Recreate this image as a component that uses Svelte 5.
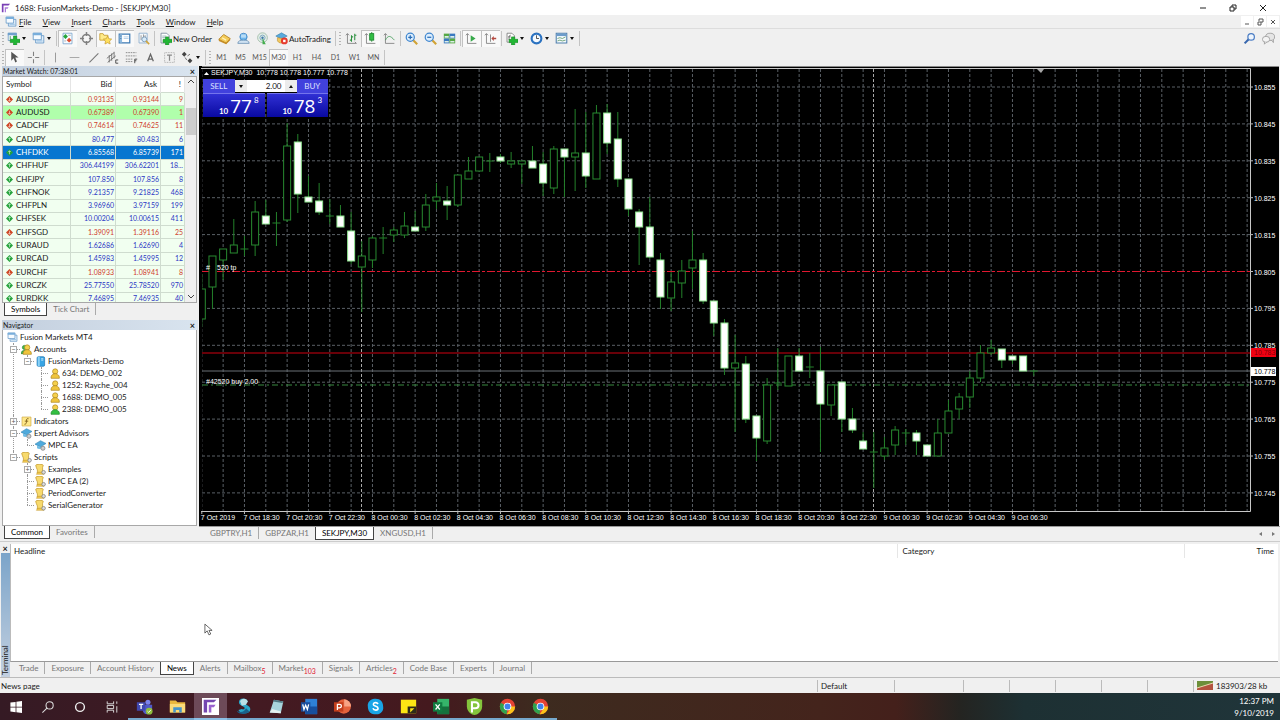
<script lang="ts">
	type Candle = [number, number, number, number, 'up' | 'down' | 'flat'];

	const menus = ['File', 'View', 'Insert', 'Charts', 'Tools', 'Window', 'Help'];
	const timeframes = ['M1', 'M5', 'M15', 'M30', 'H1', 'H4', 'D1', 'W1', 'MN'];
	const drawTools = ['vline', 'hline', 'trend', 'channel', 'fibo', 'letter', 'label'];

	const quotes = [
		['AUDSGD', '0.93135', '0.93144', '9', 'down'],
		['AUDUSD', '0.67389', '0.67390', '1', 'down'],
		['CADCHF', '0.74614', '0.74625', '11', 'down'],
		['CADJPY', '80.477', '80.483', '6', 'up'],
		['CHFDKK', '6.85568', '6.85739', '171', 'up'],
		['CHFHUF', '306.44199', '306.62201', '18...', 'up'],
		['CHFJPY', '107.850', '107.856', '8', 'up'],
		['CHFNOK', '9.21357', '9.21825', '468', 'up'],
		['CHFPLN', '3.96960', '3.97159', '199', 'up'],
		['CHFSEK', '10.00204', '10.00615', '411', 'up'],
		['CHFSGD', '1.39091', '1.39116', '25', 'down'],
		['EURAUD', '1.62686', '1.62690', '4', 'up'],
		['EURCAD', '1.45983', '1.45995', '12', 'up'],
		['EURCHF', '1.08933', '1.08941', '8', 'down'],
		['EURCZK', '25.77550', '25.78520', '970', 'up'],
		['EURDKK', '7.46895', '7.46935', '40', 'up'],
	];

	const tree = [
		{ label: 'Accounts', icon: 'users', toggle: '-', items: [
			{ label: 'FusionMarkets-Demo', icon: 'server', toggle: '-', items: [
				{ label: '634: DEMO_002', icon: 'user' },
				{ label: '1252: Rayche_004', icon: 'user' },
				{ label: '1688: DEMO_005', icon: 'user' },
				{ label: '2388: DEMO_005', icon: 'userOn' },
			] },
		] },
		{ label: 'Indicators', icon: 'func', toggle: '+' },
		{ label: 'Expert Advisors', icon: 'hat', toggle: '-', items: [
			{ label: 'MPC EA', icon: 'hat' },
		] },
		{ label: 'Scripts', icon: 'script', toggle: '-', items: [
			{ label: 'Examples', icon: 'script', toggle: '+' },
			{ label: 'MPC EA (2)', icon: 'script' },
			{ label: 'PeriodConverter', icon: 'script' },
			{ label: 'SerialGenerator', icon: 'script' },
		] },
	];

	const chartTabs = ['GBPTRY,H1', 'GBPZAR,H1', 'SEKJPY,M30', 'XNGUSD,H1'];
	const terminalTabs = [
		['Trade'], ['Exposure'], ['Account History'], ['News'], ['Alerts'], ['Mailbox', '5'], ['Market', '103'],
		['Signals'], ['Articles', '2'], ['Code Base'], ['Experts'], ['Journal'],
	];
	const shell = ['start', 'find', 'cortana', 'tasks'];
	const apps = ['teams', 'folder', 'fusion', 'swirl', 'notes', 'word', 'powerpoint', 'skype', 'sticky', 'excel', 'shield', 'chrome', 'chrome'];

	let chartTab = $state('SEKJPY,M30');
	let terminalTab = $state('News');
	let timeframe = $state('M30');
	let selected = $state('CHFDKK');
	let volume = $state('2.00');

	// high, body top, body bottom, low
	const candles: Candle[] = [
		[208, 223, 253, 261, 'up'], [190, 190, 221, 243, 'up'], [183, 183, 194, 214, 'up'], [153, 179, 187, 187, 'up'],
		[170, 183, 183, 190, 'flat'], [135, 146, 179, 190, 'up'], [134, 150, 158, 158, 'down'], [146, 157, 157, 180, 'flat'],
		[57, 80, 154, 156, 'up'], [68, 76, 128, 147, 'down'], [110, 131, 136, 136, 'down'], [117, 135, 146, 149, 'down'],
		[133, 150, 150, 158, 'flat'], [139, 150, 161, 161, 'down'], [146, 165, 195, 198, 'down'], [175, 190, 201, 246, 'up'],
		[170, 172, 194, 202, 'up'], [161, 172, 172, 188, 'flat'], [161, 164, 169, 176, 'up'], [146, 160, 169, 172, 'up'],
		[145, 161, 165, 165, 'down'], [128, 139, 161, 165, 'up'], [117, 131, 135, 143, 'up'], [120, 135, 139, 154, 'down'],
		[109, 109, 139, 141, 'up'], [91, 105, 113, 113, 'up'], [91, 91, 105, 105, 'up'], [87, 95, 95, 106, 'flat'],
		[88, 91, 95, 97, 'down'], [86, 95, 98, 102, 'up'], [95, 95, 98, 118, 'up'], [80, 95, 102, 102, 'down'],
		[86, 98, 117, 130, 'down'], [80, 83, 122, 128, 'up'], [83, 83, 91, 131, 'down'], [43, 87, 91, 125, 'up'],
		[46, 87, 110, 122, 'down'], [39, 47, 113, 113, 'up'], [38, 47, 77, 88, 'down'], [46, 73, 113, 121, 'down'],
		[113, 113, 143, 150, 'down'], [143, 146, 161, 199, 'down'], [131, 161, 191, 193, 'down'], [187, 194, 231, 243, 'down'],
		[206, 216, 232, 245, 'up'], [194, 205, 217, 232, 'up'], [165, 194, 202, 223, 'up'], [187, 194, 235, 238, 'down'],
		[235, 235, 257, 270, 'down'], [253, 257, 302, 309, 'down'], [269, 297, 302, 366, 'up'], [290, 298, 353, 357, 'down'],
		[350, 350, 372, 395, 'down'], [312, 319, 375, 378, 'up'], [282, 317, 317, 324, 'flat'], [290, 290, 320, 320, 'up'],
		[282, 290, 305, 305, 'down'], [287, 301, 301, 312, 'flat'], [281, 305, 338, 386, 'down'], [319, 319, 339, 350, 'up'],
		[316, 316, 353, 366, 'down'], [342, 353, 364, 367, 'down'], [366, 375, 383, 383, 'down'], [366, 386, 386, 422, 'flat'],
		[371, 382, 390, 394, 'up'], [360, 364, 379, 389, 'up'], [363, 367, 367, 379, 'flat'], [364, 367, 375, 389, 'down'],
		[379, 379, 390, 390, 'down'], [353, 367, 390, 390, 'up'], [334, 345, 367, 367, 'up'], [327, 331, 343, 353, 'up'],
		[305, 312, 331, 342, 'up'], [279, 287, 312, 316, 'up'], [274, 282, 287, 289, 'up'], [283, 283, 294, 302, 'down'],
		[290, 290, 294, 298, 'down'], [290, 290, 305, 305, 'down'], [304, 305, 305, 310, 'flat'],
	];
	const times = [
		'7 Oct 2019', '7 Oct 18:30', '7 Oct 20:30', '7 Oct 22:30', '8 Oct 00:30', '8 Oct 02:30', '8 Oct 04:30',
		'8 Oct 06:30', '8 Oct 08:30', '8 Oct 10:30', '8 Oct 12:30', '8 Oct 14:30', '8 Oct 16:30', '8 Oct 18:30',
		'8 Oct 20:30', '8 Oct 22:30', '9 Oct 00:30', '9 Oct 02:30', '9 Oct 04:30', '9 Oct 06:30',
	];
	const prices = Array.from({ length: 12 }, (_, i) => (10.855 - i * 0.01).toFixed(3));

	let width = $state(1081);
	let height = $state(460);
	let right = $derived(width - 29);
	let bottom = $derived(height - 15);
	let columns = $derived(Math.max(0, Math.floor((right - 3) / (64 / 3)) + 1));

	const barX = (i: number) => 2.8 + (i * 32) / 3;
	const priceY = (i: number) => 21 + i * 36.9;
</script>

{#snippet icon(name: string)}
	<svg class="icon" viewBox="0 0 16 16" aria-hidden="true">
		{#if name === 'newchart'}
			<path d="M1.500 1.500h10v9h-10z" fill="#f2f8fd" stroke="#6f9cc4" /><path d="M1 1h11v3H1z" fill="#6fa0cc" /><path d="M4 5v4" stroke="#4a9850" /><path d="M8 5h4v4h4v4h-4v3H8v-3H4V9h4z" fill="#21b634" stroke="#12861f" stroke-width=".7" />
		{:else if name === 'windows'}
			<path d="M4.500 4.500h10v9h-10z" fill="#e7f2fb" stroke="#5e93c4" /><path d="M1.500 1.500h10v8h-10z" fill="#f6fbff" stroke="#5e93c4" /><path d="M1 1h11v3H1z" fill="#79aedb" /><path d="M6 11h7" stroke="#79aedb" />
		{:else if name === 'watch'}
			<path d="M2.500 1.500h11v13h-11z" fill="#f7fbff" stroke="#76a3cb" /><path d="M5.500 2.500l3 3-3 3-3-3z" fill="#25a63b" /><path d="M10 7l3 3-3 3-3-3z" fill="#dd4d31" /><path d="M9 4h3M4 11h2" stroke="#999" />
		{:else if name === 'target'}
			<circle cx="8" cy="8" r="5" fill="#f6f6f6" stroke="#808080" stroke-width="1.800" /><path d="M8 0v5M8 11v5M0 8h5M11 8h5" stroke="#808080" stroke-width="1.800" />
		{:else if name === 'navigator'}
			<path d="M1 2h4l1 2h5v6H1z" fill="#ffeb8a" stroke="#c59b2e" /><path d="M10.500 5l1.600 3.300 3.500.4-2.600 2.500.7 3.600-3.200-1.700-3.200 1.700.7-3.600-2.600-2.500 3.500-.4z" fill="#ffe05d" stroke="#c2962a" stroke-width=".8" />
		{:else if name === 'terminal'}
			<path d="M1.500 2.500h13v11h-13z" fill="#fff" stroke="#3d7ab4" stroke-width="1.500" /><path d="M2 3h3v10H2z" fill="#8fbbe0" /><path d="M7 6h6M7 8h6" stroke="#a9c8e4" /><path d="M3 5h1M3 8h1" stroke="#274f7b" />
		{:else if name === 'tester'}
			<path d="M2.500 1.500h10v12h-10z" fill="#f4f8fc" stroke="#86a9ca" /><path d="M5 4v6M8 3v5M10 4v3" stroke="#888" /><circle cx="9" cy="9" r="3" fill="#d7ebfa" stroke="#6f93b4" /><path d="M11 11l4 4" stroke="#d2a63d" stroke-width="2" />
		{:else if name === 'order'}
			<path d="M2.500 1.500h7l3 3v9h-10z" fill="#fff" stroke="#789" /><path d="M4 5h5M4 7h4" stroke="#8aa" /><path d="M8 6h4v3h4v4h-4v3H8v-3H5V9h3z" fill="#21b634" stroke="#12861f" stroke-width=".7" />
		{:else if name === 'book'}
			<path d="M1 9l6-6 8 5-5 6z" fill="#f3cb58" stroke="#b07c1c" /><path d="M1 9v2l9 4 5-5V8l-5 5z" fill="#c58d28" /><path d="M5 7l5 3" stroke="#fff2bd" stroke-width="1.500" />
		{:else if name === 'headset'}
			<circle cx="8" cy="6" r="4.500" fill="#6db6ec" stroke="#3c83c4" /><path d="M1 14c0-3 3-4 7-4s7 1 7 4z" fill="#cfe2f2" stroke="#6d93b5" /><path d="M5 3h6v4H5z" fill="#b8dcf6" />
		{:else if name === 'signal'}
			<circle cx="8" cy="7" r="6" fill="#e5f0e8" stroke="#9bb7a5" /><circle cx="8" cy="7" r="3.200" fill="none" stroke="#6d9ab8" /><path d="M8 7l4 8H8z" fill="#43ad4e" /><circle cx="8" cy="7" r="1.500" fill="#3c79a8" />
		{:else if name === 'auto'}
			<path d="M1 5l7-4 7 4-7 4z" fill="#58a9dc" stroke="#357ca9" stroke-width=".7" /><path d="M3 7v4c2 3 5 3 7 2V8z" fill="#f1c860" stroke="#ba8c2e" stroke-width=".7" /><circle cx="11.500" cy="11" r="4.200" fill="#e6392b" /><path d="M10 9.500h3v3h-3z" fill="#fff" />
		{:else if name === 'bars'}
			<path d="M3 2v12h11M1 4l2-2 2 2M12 12l2 2" stroke="#777" fill="none" /><path d="M8 4v8M8 10H6M8 6h2M12 2v8M12 4h2" stroke="#2d9140" stroke-width="1.300" />
		{:else if name === 'candles'}
			<path d="M3 2v12h11M1 4l2-2 2 2" stroke="#777" fill="none" /><path d="M9.500 0v12" stroke="#197e2a" /><rect x="7" y="2" width="5" height="8" fill="#31bd44" stroke="#17852a" />
		{:else if name === 'line'}
			<path d="M3 2v12h11M1 4l2-2 2 2" stroke="#777" fill="none" /><path d="M3 10c3-6 6-6 11 0" stroke="#3b9951" fill="none" />
		{:else if name === 'zoomin' || name === 'zoomout'}
			<path d="M9 9l6 6" stroke="#d1a335" stroke-width="2.600" /><circle cx="6.500" cy="6.500" r="5" fill="#dceefe" stroke="#3f86cf" stroke-width="1.500" /><path d={name === 'zoomin' ? 'M4 6.500h5M6.500 4v5' : 'M4 6.500h5'} stroke="#2a6db5" stroke-width="1.500" />
		{:else if name === 'tile'}
			<path d="M1 2h7v6H1z" fill="#56a945" /><path d="M8 2h7v6H8z" fill="#3979c1" /><path d="M1 8h7v6H1z" fill="#3979c1" /><path d="M8 8h7v6H8z" fill="#56a945" /><path d="M2 5h5v2H2zM9 5h5v2H9zM2 11h5v2H2zM9 11h5v2H9z" fill="#dceee8" />
		{:else if name === 'scroll'}
			<path d="M3 2v12h11M1 4l2-2 2 2" stroke="#777" fill="none" /><path d="M7 4l6 4-6 4z" fill="#37a94a" />
		{:else if name === 'shift'}
			<path d="M3 2v12h11M1 4l2-2 2 2M8 3v9" stroke="#777" fill="none" /><path d="M9 8l3-3v2h3v2h-3v2z" fill="#b5483f" />
		{:else if name === 'indicator'}
			<path d="M2.500 1.500h6l3 3v8h-9z" fill="#fff" stroke="#777" /><path d="M7 4c-2 0-2 1-2 6M4 6h3" stroke="#555" fill="none" /><path d="M8 6h4v3h4v4h-4v3H8v-3H5V9h3z" fill="#21b634" stroke="#12861f" stroke-width=".7" />
		{:else if name === 'clock'}
			<circle cx="8" cy="8" r="6" fill="#f5faff" stroke="#2b72c0" stroke-width="2.600" /><path d="M8 4v4h3" stroke="#333" fill="none" />
		{:else if name === 'template'}
			<path d="M1.500 1.500h13v12h-13z" fill="#f5faff" stroke="#4e7eac" stroke-width="1.300" /><path d="M2 2h12v3H2z" fill="#6c9ccb" /><path d="M3 8l3-1 3 1 4-2M3 11l3-1 3 1 4-1" stroke="#5b9864" fill="none" />
		{:else if name === 'cursor'}
			<path d="M4 1v11l3-3 2 5 2-1-2-5h4z" fill="#555" />
		{:else if name === 'cross'}
			<path d="M8 1v5M8 10v5M1 8h5M10 8h5" stroke="#808080" stroke-width="1.300" />
		{:else if name === 'vline'}
			<path d="M8 2v12" stroke="#888" />
		{:else if name === 'hline'}
			<path d="M2 8h12" stroke="#999" />
		{:else if name === 'trend'}
			<path d="M3 14L14 3" stroke="#777" stroke-width="1.300" />
		{:else if name === 'channel'}
			<path d="M1 9l9-7M2 14l10-8M4 5v9M7 3v9M10 1v8" stroke="#666" /><path d="M15 11h-3v4h3" stroke="#333" fill="none" />
		{:else if name === 'fibo'}
			<path d="M1 2h13M1 6h13M1 10h9M1 13h9" stroke="#777" stroke-dasharray="2 1" /><path d="M12 15v-5h3M12 12h2" stroke="#333" fill="none" />
		{:else if name === 'letter'}
			<path d="M4.500 12.500L8 4l3.500 8.500M6 10h4" stroke="#666" stroke-width="1.600" fill="none" />
		{:else if name === 'label'}
			<path d="M2 2h12v12H2z" stroke="#999" stroke-dasharray="1 1" fill="none" /><path d="M5 5h6M8 5v7" stroke="#888" stroke-width="1.500" />
		{:else if name === 'shapes'}
			<path d="M4 1l3 3-3 3-3-3zM11 9l3 3-3 3-3-3z" fill="#444" /><path d="M5 8l2 3M8 6l3-2" stroke="#555" />
		{:else if name === 'search'}
			<path d="M7 9l-5 5" stroke="#3867ae" stroke-width="2.600" /><circle cx="10" cy="6" r="4" fill="#eef5fd" stroke="#4a7cc3" stroke-width="1.500" />
		{:else if name === 'chat'}
			<ellipse cx="10" cy="6" rx="5.500" ry="4.500" fill="#e6e6e6" stroke="#999" /><ellipse cx="5" cy="9" rx="4.500" ry="3.700" fill="#f4f4f4" stroke="#999" /><path d="M3 12v3l3-3M12 10l2 3v-4" fill="#eee" stroke="#999" />
		{:else if name === 'user' || name === 'userOn' || name === 'users'}
			{#if name === 'users'}
				<circle cx="5" cy="5" r="3" fill="#43b94a" stroke="#2b8332" /><path d="M0 14c0-6 9-6 9 0z" fill="#43b94a" stroke="#2b8332" />
			{/if}
			<circle cx="9" cy="5" r="3.800" fill="#f5d04c" stroke="#ac8420" /><path d="M3 15c-1-9 13-9 12 0z" fill={name === 'userOn' ? '#34c043' : '#efc43c'} stroke={name === 'userOn' ? '#1e8a2b' : '#ac8420'} />
		{:else if name === 'server'}
			<rect x="3" y="1" width="11" height="14" rx="2" fill="#38a5e5" stroke="#1b73b1" /><path d="M4 1h3v14H4z" fill="#8bd1f5" /><path d="M9 4h3M9 6h3" stroke="#fff" />
		{:else if name === 'func'}
			<path d="M1.500 1.500h13v13h-13z" fill="#ffe889" stroke="#cfab45" /><path d="M11 4c-3-1-3 1-3 4s-1 4-3 4M5.500 7.500h5" stroke="#7a5b16" stroke-width="1.300" fill="none" />
		{:else if name === 'hat'}
			<path d="M0 6l8-5 8 4-8 5z" fill="#4faadc" stroke="#2e7fae" stroke-width=".8" /><path d="M3 8v4c3 2 6 1 8-1V7l-3 3z" fill="#6ebbe4" /><circle cx="11.500" cy="12" r="3" fill="#ccc" stroke="#777" />
		{:else if name === 'script'}
			<path d="M1 2c0-2 11-2 11 0l-1 3v8H3c2-4-1-6-2-11z" fill="#f7da6e" stroke="#bf9428" /><path d="M4 12h9v3H2z" fill="#f3cb51" stroke="#bf9428" stroke-width=".7" /><circle cx="12.500" cy="12" r="2.600" fill="#ddd" stroke="#777" />
		{/if}
	</svg>
{/snippet}

{#snippet appIcon(name: string)}
	<svg class="app-icon" viewBox="0 0 20 20" aria-hidden="true">
		{#if name === 'start'}
			<path d="M3 4.500l6.500-.9v6H3zM10.500 3.500l7-.9v7h-7zM3 10.500h6.500v6L3 15.600zM10.500 10.500h7v7l-7-.9z" fill="#fff" />
		{:else if name === 'find'}
			<circle cx="12" cy="8" r="4.500" fill="none" stroke="#ddd" stroke-width="1.300" /><path d="M9 11l-6 6" stroke="#ddd" stroke-width="1.300" />
		{:else if name === 'cortana'}
			<circle cx="10" cy="10" r="5.500" fill="none" stroke="#eee" stroke-width="1.800" />
		{:else if name === 'tasks'}
			<path d="M4 3v3h8V3M4 17v-3h8v3M4 8h8v4H4zM16 3v3M16 9v8" fill="none" stroke="#ddd" stroke-width="1.200" />
		{:else if name === 'teams'}
			<circle cx="14" cy="5" r="3" fill="#7b83eb" /><path d="M8 8h11v5c0 4-3 6-6 6s-5-2-5-5z" fill="#5059c9" /><path d="M1 5h10v10H1z" fill="#4048b0" /><path d="M3.500 7.500h5M6 7.500v5.500" stroke="#fff" stroke-width="1.500" /><circle cx="15.500" cy="15.500" r="4" fill="#8dbd3d" /><path d="M13.500 15.500l1.500 1.500 2.500-3" stroke="#fff" fill="none" />
		{:else if name === 'folder'}
			<path d="M1 3h7l2 2h9v12H1z" fill="#e9b73d" /><path d="M1 7h18v10H1z" fill="#fbdb79" /><path d="M5 11h10v6h-3v-3H8v3H5z" fill="#4694c9" />
		{:else if name === 'fusion'}
			<path d="M0 0h20v20H0z" fill="#fff" /><path d="M2 2h15l-3 3H6v12H2z" fill="#7446b0" /><path d="M8 8h8l-2 3h-3v6H8z" fill="#9a62cf" />
		{:else if name === 'swirl'}
			<path d="M14 2C7-2 2 4 6 8l5 3c1 2-1 3-3 2l-4 1c2 5 14 6 14-1 0-5-8-5-7-8 0-1 2-1 4 0z" fill="#28a6c8" /><path d="M6 4c1-4 8-4 9 0l-2 4-5 1z" fill="#b9dfe5" /><path d="M2 15c5 3 9 1 11-3l4 4c-3 4-13 4-15-1z" fill="#19638b" />
		{:else if name === 'notes'}
			<path d="M7 2l11 2-3 14-13-1z" fill="#a8d4dc" /><path d="M7 2l11 2-1 2L6 4z" fill="#517a85" /><path d="M5 13l10 3v2L2 17z" fill="#e4f0f0" />
		{:else if name === 'word' || name === 'excel'}
			<path d="M5 1h14v18H5z" fill={name === 'word' ? '#2e80d5' : '#35b56a'} /><path d="M5 10h14v9H5z" fill={name === 'word' ? '#174f9d' : '#15713d'} /><path d="M0 5h11v11H0z" fill={name === 'word' ? '#194d9c' : '#107c41'} /><path d={name === 'word' ? 'M2 7.500l1.500 6 2-5 2 5 1.500-6' : 'M3 7.500l5 6M8 7.500l-5 6'} stroke="#fff" stroke-width="1.500" fill="none" />
		{:else if name === 'powerpoint'}
			<circle cx="11.500" cy="10" r="8.500" fill="#e5633c" /><path d="M12 1.500a8.500 8.500 0 0 1 8 8.500h-8z" fill="#f8a384" /><path d="M0 5h11v11H0z" fill="#c43e1c" /><path d="M4 14V7.500h2.500c3 0 3 4 0 4H4" stroke="#fff" stroke-width="1.500" fill="none" />
		{:else if name === 'skype'}
			<path d="M10 1c6 0 9 4 9 9 1 6-4 10-9 9-6 1-9-4-9-9-1-5 4-10 9-9z" fill="#1aa5e7" /><path d="M13 7c-2-3-7-1-5 1.500 1 1 5 1 5 3.500 0 3-5 3-6 0" stroke="#fff" stroke-width="1.900" fill="none" />
		{:else if name === 'sticky'}
			<path d="M1 2h18v16H1z" fill="#fde514" /><path d="M9 10h10v8H9z" fill="#2d2b1a" /><path d="M12 12h5l-5 5z" fill="#fde514" />
		{:else if name === 'shield'}
			<path d="M1 2l9-2 9 2v8c0 6-6 10-9 10S1 16 1 10z" fill="#84c43c" /><path d="M7 17V5h4c5 0 5 7 0 7H8" fill="none" stroke="#fff" stroke-width="2.400" />
		{:else if name === 'chrome'}
			<circle cx="10" cy="10" r="9" fill="#e54335" /><path d="M10 10L2.200 5.500A9 9 0 0 0 9 19z" fill="#2fa34e" /><path d="M10 10h9a9 9 0 0 1-10 9l5-7z" fill="#fbc41a" /><circle cx="10" cy="10" r="4.500" fill="#fff" /><circle cx="10" cy="10" r="3.500" fill="#3f82ed" />
		{/if}
	</svg>
{/snippet}

{#snippet tool(name: string, active = false, drop = false)}
	<button class="tool" class:active class:drop aria-label={name}>
		{@render icon(name)}
		{#if drop}<span class="caret"></span>{/if}
	</button>
{/snippet}

{#snippet branch(items: any[])}
	<ul>
		{#each items as item}
			<li>
				{#if item.toggle}<button class="toggle" aria-label="Toggle {item.label}">{item.toggle === '+' ? '+' : '−'}</button>{/if}
				<div class="node">{@render icon(item.icon)}<span>{item.label}</span></div>
				{#if item.items}{@render branch(item.items)}{/if}
			</li>
		{/each}
	</ul>
{/snippet}

<div class="desktop">
	<header class="titlebar">
		<svg class="logo" viewBox="0 0 12 12" aria-hidden="true"><path d="M1 1h10L9 3H3v8H1z" fill="#7a3fb5" /><path d="M4.500 5H9L8 7H6v4H4.500z" fill="#a878d8" /></svg>
		<span>1688: FusionMarkets-Demo - [SEKJPY,M30]</span>
		<div class="window-buttons">
			<button aria-label="Minimize"><svg viewBox="0 0 8 8"><path d="M1 4h6" /></svg></button>
			<button aria-label="Restore"><svg viewBox="0 0 8 8"><path d="M1 3h4v4H1zM3 3V1h4v4H5" /></svg></button>
			<button aria-label="Close"><svg viewBox="0 0 8 8"><path d="M1 1l6 6M7 1L1 7" /></svg></button>
		</div>
	</header>

	<nav class="menubar">
		{@render icon('windows')}
		{#each menus as m}
			<button><u>{m[0]}</u>{m.slice(1)}</button>
		{/each}
		<div class="mdi-buttons">
			<button aria-label="Minimize chart"><svg viewBox="0 0 8 8"><path d="M2 6h4" /></svg></button>
			<button aria-label="Restore chart"><svg viewBox="0 0 8 8"><path d="M2 4h3v3H2zM3 3V1h4v3H5" /></svg></button>
			<button aria-label="Close chart"><svg viewBox="0 0 8 8"><path d="M2 2l4 4M6 2L2 6" /></svg></button>
		</div>
	</nav>

	<div class="toolbar">
		<i class="grip"></i>
		{@render tool('newchart', false, true)}
		{@render tool('windows', false, true)}
		<i class="sep"></i>
		{@render tool('watch', true)}
		{@render tool('target')}
		{@render tool('navigator', true)}
		{@render tool('terminal', true)}
		{@render tool('tester')}
		<i class="sep"></i>
		<button class="text-tool">{@render icon('order')}New Order</button>
		{@render tool('book')}
		{@render tool('headset')}
		{@render tool('signal')}
		<button class="text-tool">{@render icon('auto')}AutoTrading</button>
		<i class="sep"></i>
		<i class="grip"></i>
		{@render tool('bars')}
		{@render tool('candles', true)}
		{@render tool('line')}
		<i class="sep"></i>
		{@render tool('zoomin')}
		{@render tool('zoomout')}
		{@render tool('tile')}
		<i class="sep"></i>
		{@render tool('scroll', true)}
		{@render tool('shift', true)}
		<i class="sep"></i>
		{@render tool('indicator', false, true)}
		{@render tool('clock', false, true)}
		{@render tool('template', false, true)}
		<i class="sep"></i>
		<div class="toolbar-end">
			{@render tool('search')}
			{@render tool('chat')}
		</div>
	</div>

	<div class="toolbar second">
		<i class="grip"></i>
		{@render tool('cursor', true)}
		{@render tool('cross')}
		<i class="sep"></i>
		{#each drawTools as t}
			{@render tool(t)}
		{/each}
		{@render tool('shapes', false, true)}
		<i class="sep"></i>
		<i class="grip"></i>
		{#each timeframes as t}
			<button class="tool frame" class:active={timeframe === t} onclick={() => timeframe = t}>{t}</button>
		{/each}
		<i class="sep"></i>
	</div>

	<main>
		<aside>
			<section class="panel watch">
				<h2>Market Watch: 07:38:01<button aria-label="Close Market Watch">×</button></h2>
				<div class="watch-body">
					<div class="watch-table">
						<table>
							<thead>
								<tr><th>Symbol</th><th>Bid</th><th>Ask</th><th>!</th></tr>
							</thead>
							<tbody>
								{#each quotes as [symbol, bid, ask, spread, dir]}
									<tr class={dir} class:hot={symbol === 'AUDUSD'} class:selected={selected === symbol} onclick={() => selected = symbol}>
										<td><svg class="tick" viewBox="0 0 8 8" aria-hidden="true"><path class="gem" d="M4 0l4 4-4 4-4-4z" /><path d={dir === 'up' ? 'M4 2v4M2.500 3.500L4 2l1.500 1.500' : 'M4 2v4M2.500 4.500L4 6l1.500-1.500'} fill="none" stroke="#fff" stroke-width=".6" /></svg>{symbol}</td>
										<td>{bid}</td><td>{ask}</td><td>{spread}</td>
									</tr>
								{/each}
							</tbody>
						</table>
					</div>
					<div class="scrollbar">
						<svg viewBox="0 0 8 8"><path d="M1 5l3-3 3 3" /></svg>
						<i></i>
						<svg viewBox="0 0 8 8"><path d="M1 2l3 3 3-3" /></svg>
					</div>
				</div>
				<div class="tabs">
					<button class="active">Symbols</button>
					<button>Tick Chart</button>
				</div>
			</section>

			<section class="panel navigator">
				<h2>Navigator<button aria-label="Close Navigator">×</button></h2>
				<div class="tree">
					<div class="node">{@render icon('windows')}<span>Fusion Markets MT4</span></div>
					{@render branch(tree)}
				</div>
				<div class="tabs">
					<button class="active">Common</button>
					<button>Favorites</button>
				</div>
			</section>
		</aside>

		<section class="chart">
			<div class="canvas" bind:clientWidth={width} bind:clientHeight={height}>
				<svg class="plot" width="100%" height="100%" role="img" aria-label="SEKJPY M30 chart">
					<g class="grid">
						{#each Array(columns) as _, i}
							<line x1={barX(i * 2)} x2={barX(i * 2)} y1="3" y2={bottom} />
						{/each}
						{#each prices as _, i}
							<line x1="3" x2={right} y1={priceY(i)} y2={priceY(i)} />
						{/each}
					</g>
					<line class="day" x1="162.500" x2="162.500" y1="3" y2={bottom} />
					<line class="day" x1="674.500" x2="674.500" y1="3" y2={bottom} />
					<line class="tp" x1="3" x2={right} y1="205.500" y2="205.500" />
					<line class="ask" x1="3" x2={right} y1="287" y2="287" />
					<line class="bid" x1="3" x2={right} y1="305" y2="305" />
					<line class="position" x1="3" x2={right} y1="319" y2="319" />
					{#each candles as [high, top, low, tail, kind], i}
						<g class="candle {kind}">
							<line x1={barX(i)} x2={barX(i)} y1={high} y2={tail} />
							{#if kind === 'flat'}
								<line x1={barX(i) - 4} x2={barX(i) + 4} y1={top} y2={top} />
							{:else}
								<rect x={barX(i) - 3.5} y={top} width="7" height={low - top} />
							{/if}
						</g>
					{/each}
					<path d="M0 0h3v{height}H0z" fill="#000" />
					<path class="frame-line" d="M2 2.500H{right + 0.5}V{bottom + 0.5}H2" />
					<path d="M838 3h7l-3 4z" fill="#a8a8a8" />
					{#each prices as price, i}
						<line class="notch" x1={right} x2={right + 3} y1={priceY(i)} y2={priceY(i)} />
						<text x={right + 4} y={priceY(i) + 3}>{price}</text>
					{/each}
					<rect x={right + 1} y="282" width="25" height="9" fill="#f00012" />
					<text x={right + 4} y="289" class="dark-red">10.783</text>
					<rect x={right + 1} y="301" width="25" height="9" fill="#fff" />
					<text x={right + 4} y="308" class="black">10.778</text>
					{#each times as time, i}
						<line class="notch" x1={barX(i * 4)} x2={barX(i * 4)} y1={bottom} y2={bottom + 3} />
						<text x={barX(i * 4) - 1} y={bottom + 9}>{time}</text>
					{/each}
					<path d="M5 9h5l-2.500-3z" fill="#fff" />
					<text x="12" y="9">SEKJPY,M30&nbsp; 10.778 10.778 10.777 10.778</text>
					<text x="7" y="204">#</text>
					<text x="18" y="204">520 tp</text>
					<text x="7" y="318">#42520 buy 2.00</text>
				</svg>

				<div class="one-click">
					<div class="order-row">
						<button class="side">SELL</button>
						<button class="step" aria-label="Decrease volume"><span class="caret"></span></button>
						<input aria-label="Volume" bind:value={volume} />
						<button class="step" aria-label="Increase volume"><span class="caret up"></span></button>
						<button class="side">BUY</button>
					</div>
					<div class="price-row">
						<button><b>10</b><strong>77</strong><sup>8</sup></button>
						<button><b>10</b><strong>78</strong><sup>3</sup></button>
					</div>
				</div>
			</div>
			<div class="chart-tabs tabs">
				{#each chartTabs as t}
					<button class:active={chartTab === t} onclick={() => chartTab = t}>{t}</button>
				{/each}
				<div class="tab-scroll">
					<button aria-label="Previous tabs"><span class="caret left"></span></button>
					<button aria-label="Next tabs"><span class="caret right"></span></button>
				</div>
			</div>
		</section>
	</main>

	<section class="terminal">
		<div class="spine">
			<button aria-label="Close Terminal">×</button>
			<span>Terminal</span>
		</div>
		<div class="terminal-body">
			<div class="news">
				<table>
					<thead><tr><th>Headline</th><th>Category</th><th>Time</th></tr></thead>
				</table>
			</div>
			<div class="tabs">
				{#each terminalTabs as [name, count]}
					<button class:active={terminalTab === name} onclick={() => terminalTab = name}>{name}{#if count}<sub>{count}</sub>{/if}</button>
				{/each}
			</div>
		</div>
		<svg class="pointer" viewBox="0 0 10 14" aria-hidden="true"><path d="M1 1v10l2.500-2.500L5.500 13l2-1-2-4H9z" fill="#fff" stroke="#333" stroke-width=".8" /></svg>
	</section>

	<footer class="status">
		<span>News page</span>
		<span>Default</span>
		<span></span><span></span><span></span><span></span><span></span><span></span>
		<span class="traffic"><svg viewBox="0 0 16 9" aria-hidden="true"><path d="M0 0h16v9H0z" fill="#b4533f" /><path d="M0 0h16v2L0 7z" fill="#6c8f3a" /><path d="M0 7l16-5" stroke="#e8d9b0" /></svg>183903/28 kb</span>
	</footer>

	<div class="taskbar">
		{#each shell as s}
			<button class="shell" aria-label={s}>{@render appIcon(s)}</button>
		{/each}
		{#each apps as a}
			<button class="app" class:current={a === 'fusion'} aria-label={a}>{@render appIcon(a)}</button>
		{/each}
		<div class="clock"><time>12:37 PM</time><time>9/10/2019</time></div>
	</div>
</div>

<style>
	:global(body) { background: #f0f0f0; }
	.desktop { display: flex; flex-direction: column; min-height: 100vh; background: #f0f0f0; color: #1a1a1a; font: 8px/12px Lato, "Open Sans", sans-serif; overflow: hidden; }
	.desktop :is(button, input) { font: inherit; color: inherit; margin: 0; padding: 0; border: 0; background: none; border-radius: 0; }
	.icon { width: 12px; height: 12px; flex: none; display: block; }

	.titlebar { display: flex; align-items: center; height: 15px; gap: 4px; padding: 0 2px 0 1px; background: #fff; }
	.logo { width: 10px; height: 10px; }
	.window-buttons { display: flex; margin-left: auto; }
	.window-buttons button { width: 30px; height: 14px; display: grid; place-items: center; }
	.window-buttons svg { width: 8px; height: 8px; fill: none; stroke: #222; }

	.menubar { display: flex; align-items: center; height: 14px; gap: 11px; padding: 0 1px 0 5px; border-bottom: 1px solid #ddd; box-sizing: border-box; }
	.menubar > .icon { margin-right: -9px; }
	.mdi-buttons { display: flex; gap: 1px; margin-left: auto; }
	.mdi-buttons button { width: 12px; height: 11px; display: grid; place-items: center; }
	.desktop .mdi-buttons button { background: #fff; }
	.mdi-buttons svg { width: 8px; height: 8px; fill: none; stroke: #555; }

	.toolbar { display: flex; align-items: center; height: 19px; }
	.toolbar.second { height: 18px; }
	.toolbar .icon { width: 13px; height: 13px; }
	.grip { width: 2px; height: 13px; margin: 0 1px 0 2px; background: repeating-linear-gradient(#b5b5b5 0 1px, transparent 1px 3px); flex: none; }
	.sep { width: 1px; height: 15px; margin: 0 1px; background: #c4c4c4; flex: none; }
	.tool { width: 19px; height: 17px; display: flex; align-items: center; justify-content: center; flex: none; }
	.tool.drop { width: 25px; gap: 2px; justify-content: flex-start; }
	.desktop .tool.drop { padding: 0 2px; }
	.desktop .tool.active { background: #f9f9f9; box-shadow: inset 1px 1px #c2c2c2; }
	.desktop .frame { font-size: 7px; color: #555; }
	.text-tool { display: flex; align-items: center; gap: 1px; height: 17px; }
	.desktop .text-tool { padding: 0 3px; }
	.toolbar-end { display: flex; margin-left: auto; padding-right: 2px; }
	.caret { width: 0; height: 0; border: 2px solid transparent; border-top: 3px solid #111; border-bottom: 0; }
	.caret.up { border-top: 0; border-bottom: 3px solid #111; }
	.caret.left { border: 2px solid transparent; border-right: 3px solid #777; border-left: 0; }
	.caret.right { border: 2px solid transparent; border-left: 3px solid #777; border-right: 0; }

	main { flex: 1; display: flex; min-height: 475px; }
	aside { width: 198px; flex: none; display: flex; flex-direction: column; gap: 3px; padding: 0 0 1px 2px; box-sizing: border-box; }
	.panel { display: flex; flex-direction: column; }
	.watch { height: 251px; }
	.navigator { flex: 1; }
	.panel h2 { display: flex; align-items: center; justify-content: space-between; margin: 0; height: 10px; padding: 0 3px 0 1px; font-size: 7px; line-height: 10px; font-weight: 400; background: linear-gradient(90deg, #c3cfde, #d9e4ef); }
	.desktop h2 button { font-size: 9px; font-weight: 700; line-height: 9px; }
	.watch-body { display: flex; flex: 1; min-height: 0; border: 1px solid #a8a8a8; background: #fff; overflow: hidden; margin-right: 1px; }
	.watch-table { flex: 1; height: 100%; overflow: hidden; }
	.watch table { width: 100%; height: calc(100% + 4px); border-collapse: collapse; table-layout: fixed; }
	.watch th { height: 15px; padding: 0 3px; line-height: 11px; font-weight: 400; text-align: right; background: #fff; border-right: 1px solid #e5e5e5; }
	.watch th:first-child { width: 61px; text-align: left; }
	.watch th:nth-child(4) { width: 17px; }
	.watch td { padding: 0 1px; height: 12px; line-height: 11px; text-align: right; border: 1px solid #cfdccf; border-left: 0; background: #f1fff0; font-size: 7px; color: #2a36c4; white-space: nowrap; }
	.watch td:first-child { text-align: left; font-size: 8px; color: #1a1a1a; padding-left: 3px; }
	.watch .down td:not(:first-child) { color: #d0402c; }
	.watch .hot td { background: #b0ffab; }
	.watch .selected td, .watch .selected td:first-child { background: #0776d0; color: #fff; }
	.tick { width: 7px; height: 7px; margin-right: 3px; vertical-align: -1px; }
	.up .gem { fill: #24a23b; }
	.down .gem { fill: #cf4524; }
	.scrollbar { width: 11px; display: flex; flex-direction: column; align-items: center; padding: 1px 0; background: #f0f0f0; box-sizing: border-box; }
	.scrollbar svg { width: 8px; height: 8px; fill: none; stroke: #444; }
	.scrollbar i { width: 10px; height: 27px; margin: 22px 0 auto; background: #cdcdcd; }

	.tabs { display: flex; height: 14px; }
	.tabs button { white-space: nowrap; }
	.desktop .tabs > button { padding: 0 6px; color: #777; border-right: 1px solid #aaa; height: 12px; line-height: 12px; }
	.desktop .tabs > button.active { height: 13px; margin-left: -1px; color: #000; background: #fff; border: 1px solid #444; border-top: 0; line-height: 12px; }
	.panel .tabs { padding-left: 3px; }

	.tree { flex: 1; padding: 1px 0 0 4px; background: #fff; border: 1px solid #a8a8a8; border-top: 0; margin-right: 1px; }
	.tree ul { list-style: none; margin: 0; padding: 0 0 0 14px; }
	.tree li { position: relative; }
	.tree li::before { content: ''; position: absolute; left: -8px; top: 6px; width: 7px; border-top: 1px dotted #999; }
	.tree li::after { content: ''; position: absolute; left: -8px; top: 0; bottom: 0; border-left: 1px dotted #999; }
	.tree li:last-child::after { bottom: auto; height: 6px; }
	.node { display: flex; align-items: center; gap: 2px; height: 12px; }
	.node .icon { width: 11px; height: 11px; }
	.desktop .toggle { position: absolute; z-index: 1; left: -11px; top: 3px; width: 7px; height: 7px; border: 1px solid #aaa; background: #fff; color: #555; font-size: 7px; line-height: 5px; box-sizing: border-box; display: grid; place-items: center; }

	.chart { flex: 1; min-width: 0; display: flex; flex-direction: column; margin-left: 1px; }
	.canvas { flex: 1; position: relative; background: #000; margin-right: 1px; box-shadow: inset 0 1px #888, inset 1px 0 #555; }
	.plot { position: absolute; inset: 0; }
	.plot text { font: 7px "Liberation Sans", sans-serif; fill: #fff; }
	.plot .dark-red { fill: #800008; }
	.plot .black { fill: #000; }
	.grid line { stroke: #5a6066; stroke-dasharray: 3 2; }
	.day { stroke: #aaa; stroke-dasharray: 3 2; }
	.tp { stroke: #e01830; stroke-dasharray: 8 2 3 2; }
	.ask { stroke: #d00010; }
	.bid { stroke: #6a7076; }
	.position { stroke: #388a40; stroke-dasharray: 6 3 2 3; }
	.candle line { stroke: #23802a; }
	.candle rect { stroke: #288a30; fill: #000; }
	.candle.down rect { stroke: #8fe58f; fill: #fff; }
	.frame-line { fill: none; stroke: #c8c8c8; }
	.notch { stroke: #bbb; }

	.one-click { position: absolute; left: 4px; top: 13px; width: 125px; color: #fff; }
	.order-row { display: flex; height: 14px; }
	.order-row .side { flex: 1; }
	.order-row .step { width: 12px; display: grid; place-items: center; }
	.order-row input { width: 38px; text-align: right; box-sizing: border-box; }
	.price-row { display: grid; grid-template-columns: 1fr 1fr; gap: 2px; }
	.price-row button { display: flex; justify-content: center; gap: 2px; height: 24px; }
	.price-row b { align-self: flex-end; line-height: 12px; }
	.price-row strong { font: 19px/24px "Open Sans", sans-serif; }
	.price-row sup { font-size: 8px; line-height: 12px; }
	.desktop .order-row .side { background: #4141dd; color: #dfe3ff; }
	.desktop .order-row .step { background: #ececec; margin: 1px 0; }
	.desktop .order-row input { background: #fff; color: #111; padding-right: 3px; margin: 1px 0; }
	.desktop .price-row button { background: linear-gradient(#3030d4, #0909a0); border-top: 1px solid #7474ec; padding-left: 10px; }

	.chart-tabs { height: 15px; padding-left: 5px; border-top: 1px solid #999; box-sizing: border-box; align-items: flex-start; }
	.tab-scroll { display: flex; margin-left: auto; height: 13px; }
	.tab-scroll button { width: 13px; display: grid; place-items: center; }

	.terminal { position: relative; display: flex; height: 136px; padding-top: 2px; box-sizing: border-box; border-top: 1px solid #ccc; }
	.spine { width: 10px; display: flex; flex-direction: column; align-items: center; }
	.desktop .spine button { height: 9px; font-size: 9px; font-weight: 700; line-height: 8px; }
	.spine span { flex: 1; width: 9px; line-height: 9px; padding-top: 2px; writing-mode: vertical-rl; transform: rotate(180deg); background: linear-gradient(#c3d0e0, #7ba4c9); }
	.terminal-body { flex: 1; display: flex; flex-direction: column; margin-right: 2px; }
	.news { flex: 1; background: #fff; border-bottom: 1px solid #999; border-left: 1px solid #bbb; }
	.news table { width: 100%; border-collapse: collapse; table-layout: fixed; }
	.news th { height: 14px; padding: 0 4px; font-weight: 400; text-align: left; border-right: 1px solid #e6e6e6; }
	.news th:first-child { width: 70%; padding-left: 3px; box-sizing: border-box; }
	.news th:last-child { width: 94px; box-sizing: border-box; text-align: right; border: 0; padding-right: 4px; }
	.terminal .tabs { height: 15px; padding-left: 3px; }
	.tabs sub { color: #e02030; font-size: 7px; line-height: 0; vertical-align: -3px; }
	.pointer { position: absolute; left: 204px; top: 81px; width: 9px; height: 13px; }

	.status { display: flex; align-items: center; height: 16px; border-top: 1px solid #bbb; box-sizing: border-box; }
	.status span { width: 46px; height: 12px; padding-left: 3px; box-sizing: border-box; border-left: 1px solid #bbb; }
	.status span:first-child { flex: 1; padding-left: 1px; border: 0; }
	.status span:nth-child(2) { width: 77px; }
	.status span:nth-child(3) { width: 69px; }
	.status .traffic { width: 87px; display: flex; align-items: center; gap: 3px; }
	.traffic svg { width: 16px; height: 9px; }

	.taskbar { display: flex; height: 27px; background: linear-gradient(90deg, #351a24 0, #431a22 20%, #44191e 34%, #3d2b1f 42%, #44241c 64%, #44201b 70%, #242421 75%, #1d3033 80%, #20353a 100%); color: #fff; }
	.taskbar button { width: 33px; height: 27px; display: grid; place-items: center; }
	.taskbar .shell { width: 32px; }
	.app-icon { width: 17px; height: 17px; }
	.shell .app-icon { width: 16px; height: 16px; }
	.taskbar .app { box-shadow: inset 0 -2px #76a9cd; }
	.desktop .taskbar .current { background: #6d4a58; box-shadow: inset 0 -2px #8cc0e6; }
	.clock { margin-left: auto; padding-right: 6px; display: flex; flex-direction: column; justify-content: center; text-align: right; }
</style>
